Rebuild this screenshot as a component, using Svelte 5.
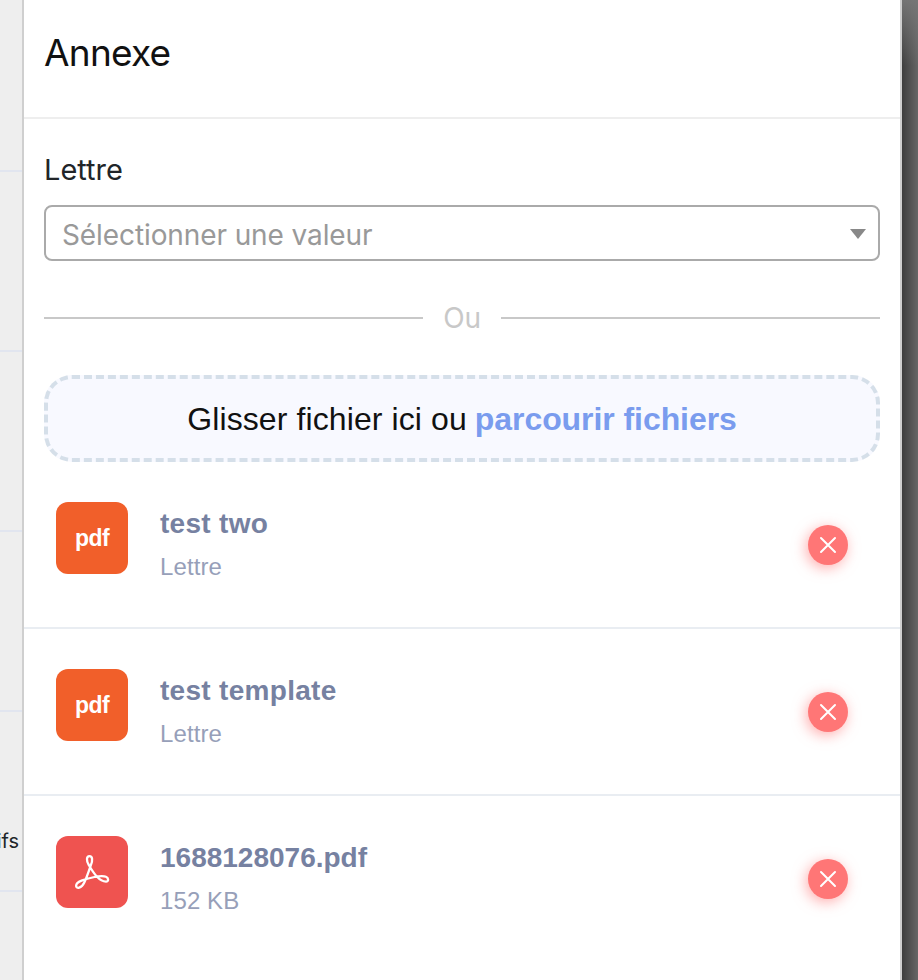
<script lang="ts">
  type Attachment = {
    id: number;
    name: string;
    detail: string;
    kind: 'template' | 'upload';
  };

  let attachments: Attachment[] = $state([
    { id: 1, name: 'test two', detail: 'Lettre', kind: 'template' },
    { id: 2, name: 'test template', detail: 'Lettre', kind: 'template' },
    { id: 3, name: '1688128076.pdf', detail: '152 KB', kind: 'upload' },
  ]);

  const backgroundRows = ['', '', '', '', 'ifs', ''];

  function remove(id: number) {
    attachments = attachments.filter((a) => a.id !== id);
  }
</script>

<div class="page">
  <div class="behind">
    {#each backgroundRows as label}
      <div class="behind-row">{label}</div>
    {/each}
  </div>

  <section class="modal">
    <header class="modal-header">
      <h1>Annexe</h1>
    </header>

    <div class="modal-body">
      <span class="field-label">Lettre</span>
      <div class="select" role="combobox" aria-expanded="false" aria-controls="letters" tabindex="0">
        <span class="placeholder">Sélectionner une valeur</span>
        <span class="arrow"></span>
      </div>

      <div class="separator"><span>Ou</span></div>

      <div class="dropzone">
        <span class="drop-text">Glisser fichier ici ou</span>
        <span class="browse">parcourir fichiers</span>
      </div>
    </div>

    <ul class="files">
      {#each attachments as file (file.id)}
        <li class="file" class:upload={file.kind === 'upload'}>
          <div class="file-icon">
            {#if file.kind === 'upload'}
              <svg width="36" height="36" viewBox="0 0 36 36" fill="none" stroke="#fff" stroke-width="2.3" stroke-linejoin="round">
                <path d="M15.5 2.1C12.3 2.1 12.2 7 14.8 11C17 14.8 19.5 19 22.8 22.5C26 26 29.5 27.6 32 27.6C35 27.6 34.6 24 32 22.8C29 21.3 25 22 20.5 23C16.5 23.9 12 25 7.5 26.7C4 28 2.1 30 2.1 32C2.3 35 7.5 34.5 10.3 28.5C12.5 24 14.5 18 16.9 11C18.8 6.5 18.6 2.1 15.5 2.1Z" />
              </svg>
            {:else}
              <span>pdf</span>
            {/if}
          </div>
          <div class="file-info">
            <span class="file-name">{file.name}</span>
            <span class="file-detail">{file.detail}</span>
          </div>
          <button class="remove" aria-label="Supprimer" onclick={() => remove(file.id)}>
            <svg width="18" height="18" viewBox="0 0 18 18" stroke="#fff" stroke-width="2" stroke-linecap="round">
              <path d="M2 2L16 16M16 2L2 16" />
            </svg>
          </button>
        </li>
      {/each}
    </ul>
  </section>

  <div class="backdrop"></div>
</div>

<style>
  :global(body) {
    margin: 0;
  }

  .page {
    display: flex;
    width: 918px;
    height: 980px;
    overflow: hidden;
    font-family: Inter, 'Liberation Sans', sans-serif;
  }

  .behind {
    flex: none;
    width: 22px;
    margin-top: -8px;
    background: #eee;
  }

  .behind-row {
    display: flex;
    align-items: center;
    justify-content: flex-end;
    box-sizing: border-box;
    height: 180px;
    padding-right: 3px;
    padding-top: 80px;
    border-bottom: 2px solid #e1e5ef;
    color: #212529;
    font-size: 20px;
  }

  .modal {
    flex: none;
    box-sizing: border-box;
    width: 880px;
    background: #fff;
    border: solid #cfcfcf;
    border-width: 0 2px;
  }

  .modal-header {
    box-sizing: border-box;
    height: 119px;
    padding: 31px 20px 0;
    border-bottom: 2px solid #eee;
  }

  h1 {
    margin: 0;
    color: #111;
    font-size: 37px;
    font-weight: 400;
    line-height: 44px;
    letter-spacing: -0.75px;
  }

  .modal-body {
    padding: 33px 20px 0;
  }

  .field-label {
    display: block;
    color: #212529;
    font-size: 29px;
    line-height: 36px;
  }

  .select {
    display: flex;
    align-items: center;
    justify-content: space-between;
    box-sizing: border-box;
    height: 56px;
    margin-top: 17px;
    padding: 4px 12px 0 16px;
    border: 2px solid #aaa;
    border-radius: 8px;
  }

  .placeholder {
    color: #999;
    font-size: 28px;
    letter-spacing: -0.1px;
  }

  .arrow {
    margin-top: -2px;
    border: 8px solid transparent;
    border-top: 10px solid #888;
    border-bottom: 0;
  }

  .separator {
    display: flex;
    align-items: center;
    gap: 20px;
    height: 36px;
    margin-top: 39px;
    color: #c8c8c8;
    font-size: 28px;
    letter-spacing: -0.3px;
  }

  .separator::before,
  .separator::after {
    content: '';
    flex: 1;
    height: 2px;
    background: #c8c8c8;
  }

  .dropzone {
    display: flex;
    align-items: center;
    justify-content: center;
    gap: 8px;
    box-sizing: border-box;
    height: 87px;
    margin-top: 39px;
    padding-top: 2px;
    border: 4px dashed #d5dfe9;
    border-radius: 28px;
    background: #f8f9ff;
    font-family: 'Liberation Sans', Arial, sans-serif;
    font-size: 32px;
    white-space: nowrap;
  }

  .drop-text {
    color: #111;
    letter-spacing: 0.1px;
  }

  .browse {
    color: #7a9cee;
    font-weight: 700;
    letter-spacing: -0.07px;
  }

  .files {
    margin: 0;
    padding: 0;
    list-style: none;
    font-family: 'Liberation Sans', Arial, sans-serif;
  }

  .file {
    display: flex;
    box-sizing: border-box;
    height: 167px;
    padding: 40px 52px 0 32px;
    border-bottom: 2px solid #e9edf2;
  }

  .file:last-child {
    border-bottom: none;
  }

  .file-icon {
    display: flex;
    align-items: center;
    justify-content: center;
    width: 72px;
    height: 72px;
    border-radius: 12px;
    background: #f15f2a;
    color: #fff;
    font-size: 23px;
    font-weight: 700;
    letter-spacing: -0.6px;
  }

  .upload .file-icon {
    background: #ef5350;
  }

  .file-info {
    display: flex;
    flex: 1;
    flex-direction: column;
    margin: 1px 0 0 32px;
  }

  .file-name {
    color: #7681a1;
    font-size: 28px;
    font-weight: 700;
    line-height: 42px;
    letter-spacing: 0.3px;
  }

  .upload .file-name {
    letter-spacing: 0;
  }

  .file-detail {
    margin-top: 4px;
    color: #979fb9;
    font-size: 24px;
    line-height: 36px;
    letter-spacing: 0.1px;
  }

  .remove {
    display: flex;
    align-items: center;
    justify-content: center;
    width: 40px;
    height: 40px;
    margin-top: 23px;
    padding: 0;
    border: none;
    border-radius: 50%;
    background: #ff7676;
    box-shadow: -2px 3px 14px rgba(255, 118, 118, 0.6);
  }

  .backdrop {
    flex: 1;
    background: linear-gradient(180deg, rgba(119, 119, 119, 0.95), rgba(119, 119, 119, 0) 66px),
      linear-gradient(90deg, #3e3e3e, #525252 50%, #666);
  }
</style>
